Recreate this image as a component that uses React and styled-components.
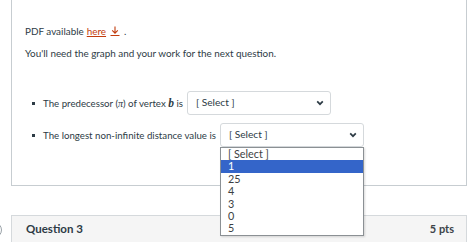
import React from 'react'
import styled, { createGlobalStyle } from 'styled-components'

const Global = createGlobalStyle`
  html, body { margin: 0; padding: 0; background: #fff; }
  body { font-family: Lato, "Noto Sans", sans-serif; color: #2d3b45; }
`

const options = ['[ Select ]', '1', '25', '4', '3', '0', '5']

function Chevron() {
  return (
    <svg width="8" height="6" viewBox="0 0 8 6">
      <path d="M1.2 1.4 L4 4.2 L6.8 1.4" fill="none" stroke="#2d3b45" strokeWidth="1.7" />
    </svg>
  )
}

function DownloadIcon() {
  return (
    <svg width="12" height="12" viewBox="0 0 12 12">
      <path d="M6 1.5 V8 M3.2 5.4 L6 8.2 L8.8 5.4 M1.5 10.5 H10.5" fill="none" stroke="#c23c0d" strokeWidth="1.1" />
    </svg>
  )
}

function App() {
  return (
    <Page>
      <Global />
      <Card>
        <Para>
          PDF available <Link>here</Link> <DownloadIcon /> .
        </Para>
        <Para>You'll need the graph and your work for the next question.</Para>
        <List>
          <Item>
            <span>
              The predecessor (<Pi>π</Pi>) of vertex <Var>b</Var> is
            </span>
            <Select>
              <span>[ Select ]</span>
              <Chevron />
            </Select>
          </Item>
          <Item>
            <span>The longest non-infinite distance value is</span>
            <SelectWrap>
              <Select>
                <span>[ Select ]</span>
                <Chevron />
              </Select>
              <Dropdown>
                {options.map((o, i) => (
                  <Option key={o} $active={i === 1}>{o}</Option>
                ))}
              </Dropdown>
            </SelectWrap>
          </Item>
        </List>
      </Card>
      <Header>
        <Marker />
        <Title>Question 3</Title>
        <Points>5 pts</Points>
      </Header>
    </Page>
  )
}

const Page = styled.div`
  position: relative;
  width: 474px;
  height: 242px;
  overflow: hidden;
  padding-left: 11px;
  padding-right: 7px;
  box-sizing: border-box;
`

const Card = styled.div`
  border: 1px solid #c7cdd1;
  border-top: none;
  padding: 24px 13px 0 13px;
  height: 186px;
  box-sizing: border-box;
`

const Para = styled.p`
  margin: 0 0 8px 0;
  font-size: 9.9px;
  line-height: 14px;
  display: flex;
  align-items: center;
  gap: 3px;
`

const Link = styled.span`
  color: #c23c0d;
  text-decoration: underline;
`

const List = styled.ul`
  list-style: none;
  margin: 31px 0 0 0;
  padding: 0 0 0 7px;
  display: flex;
  flex-direction: column;
  gap: 8px;
`

const Item = styled.li`
  display: flex;
  align-items: center;
  gap: 4px;
  font-size: 9.7px;
  height: 24px;
  &::before {
    content: '';
    width: 3px;
    height: 3px;
    background: #2d3b45;
    margin-right: 4px;
  }
`

const Pi = styled.i`
  font-family: "Liberation Serif", serif;
  font-size: 10px;
`

const Var = styled.i`
  font-family: "Liberation Serif", serif;
  font-weight: bold;
  font-size: 11.5px;
`

const SelectWrap = styled.div`
  position: relative;
`

const Select = styled.div`
  width: 144px;
  height: 24px;
  box-sizing: border-box;
  border: 1px solid #d5d9dc;
  border-radius: 3px;
  background: #fff;
  display: flex;
  align-items: center;
  justify-content: space-between;
  padding: 0 6px 0 8px;
  font-size: 10.2px;
  span { padding-bottom: 3px; }
`

const Dropdown = styled.div`
  position: absolute;
  z-index: 5;
  left: 0;
  top: 24px;
  width: 144px;
  box-sizing: border-box;
  border: 1px solid #8b9094;
  background: #fff;
  box-shadow: 1px 1px 2px rgba(0,0,0,0.15);
`

const Option = styled.div`
  height: 12.4px;
  line-height: 12.4px;
  font-size: 10.8px;
  padding-left: 7px;
  background: ${p => (p.$active ? '#3465c9' : '#fff')};
  color: ${p => (p.$active ? '#fff' : '#3c3f42')};
`

const Header = styled.div`
  position: relative;
  margin-top: 29px;
  height: 40px;
  border: 1px solid #d5d9dc;
  background: #f5f5f5;
  display: flex;
  align-items: flex-start;
  justify-content: space-between;
  padding: 6px 12px 0 14px;
`

const Marker = styled.div`
  position: absolute;
  left: -26px;
  top: 6px;
  width: 14px;
  height: 14px;
  border-radius: 50%;
  border: 1px solid #9aa2a8;
  background: #fff;
`

const Title = styled.div`
  font-size: 11.5px;
  font-weight: bold;
`

const Points = styled.div`
  font-size: 11px;
  font-weight: bold;
  color: #3c4348;
`

export default App
